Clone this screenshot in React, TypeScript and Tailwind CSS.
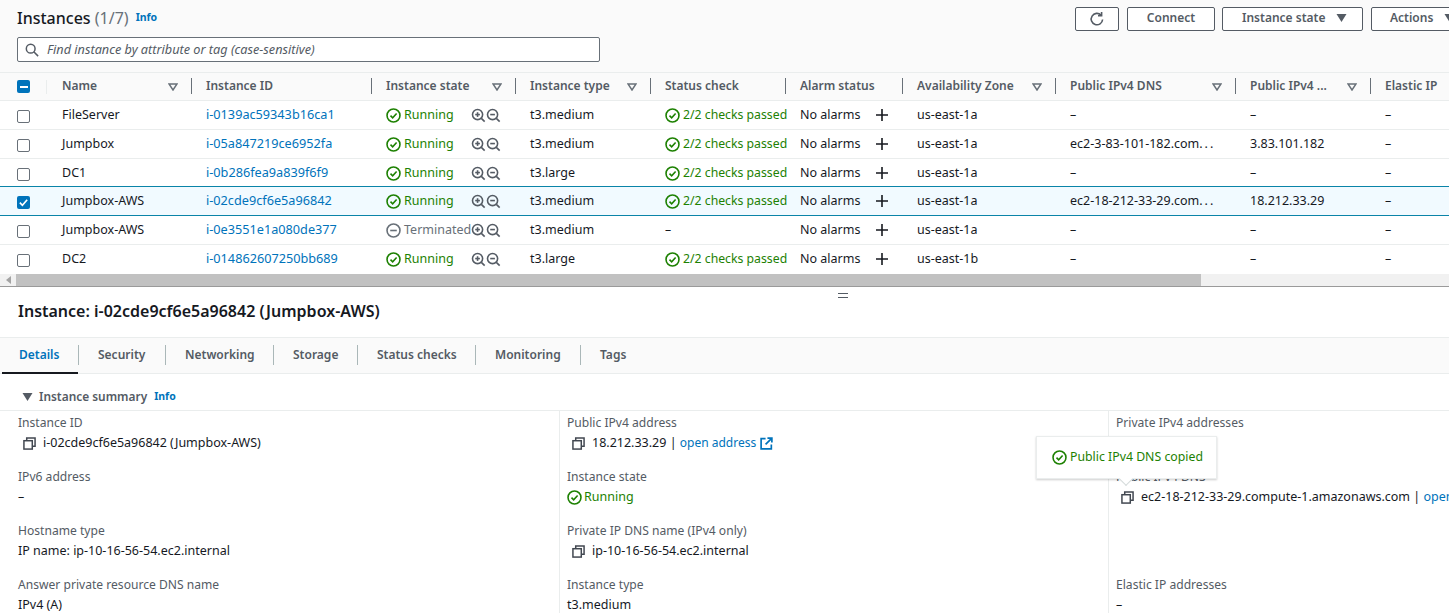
import * as React from "react";

const gridCols = "grid grid-cols-[47px_144px_180px_144px_135px_135px_117px_153px_180px_135px_79px]";

const rows = [
  { name: "FileServer", id: "i-0139ac59343b16ca1", state: "Running", type: "t3.medium", check: true, az: "us-east-1a", dns: "–", ip: "–" },
  { name: "Jumpbox", id: "i-05a847219ce6952fa", state: "Running", type: "t3.medium", check: true, az: "us-east-1a", dns: "ec2-3-83-101-182.com", ip: "3.83.101.182" },
  { name: "DC1", id: "i-0b286fea9a839f6f9", state: "Running", type: "t3.large", check: true, az: "us-east-1a", dns: "–", ip: "–" },
  { name: "Jumpbox-AWS", id: "i-02cde9cf6e5a96842", state: "Running", type: "t3.medium", check: true, az: "us-east-1a", dns: "ec2-18-212-33-29.com", ip: "18.212.33.29", selected: true },
  { name: "Jumpbox-AWS", id: "i-0e3551e1a080de377", state: "Terminated", type: "t3.medium", check: false, az: "us-east-1a", dns: "–", ip: "–" },
  { name: "DC2", id: "i-014862607250bb689", state: "Running", type: "t3.large", check: true, az: "us-east-1b", dns: "–", ip: "–" },
];

const headers = [
  { label: "Name", sort: true },
  { label: "Instance ID", sort: false },
  { label: "Instance state", sort: true },
  { label: "Instance type", sort: true },
  { label: "Status check", sort: false },
  { label: "Alarm status", sort: false },
  { label: "Availability Zone", sort: true },
  { label: "Public IPv4 DNS", sort: true },
  { label: "Public IPv4 ...", sort: true },
  { label: "Elastic IP", sort: false },
];

function CheckCircle({ className = "" }: { className?: string }) {
  return (
    <svg viewBox="0 0 16 16" className={`w-[15px] h-[15px] shrink-0 ${className}`} fill="none" stroke="currentColor" strokeWidth="1.7">
      <circle cx="8" cy="8" r="6.9" />
      <path d="M4.8 8.2l2.3 2.3 4.2-4.6" />
    </svg>
  );
}

function MinusCircle() {
  return (
    <svg viewBox="0 0 16 16" className="w-[15px] h-[15px] shrink-0 text-[#687078]" fill="none" stroke="currentColor" strokeWidth="1.7">
      <circle cx="8" cy="8" r="6.9" />
      <path d="M4.5 8h7" />
    </svg>
  );
}

function Zoom({ plus }: { plus?: boolean }) {
  return (
    <svg viewBox="0 0 16 16" className="w-[15px] h-[15px] shrink-0 text-[#545b64]" fill="none" stroke="currentColor" strokeWidth="1.7">
      <circle cx="7" cy="7" r="5.4" />
      <path d="M11 11l3.6 3.6" />
      <path d="M4.5 7h5" />
      {plus && <path d="M7 4.5v5" />}
    </svg>
  );
}

function CopyIcon() {
  return (
    <svg viewBox="0 0 14 14" className="w-[13px] h-[13px] shrink-0 text-[#414750]" fill="none" stroke="currentColor" strokeWidth="1.6">
      <rect x="1" y="4" width="9" height="9" />
      <path d="M4 3.5V1h9v9h-2.5" />
    </svg>
  );
}

function SortIcon() {
  return (
    <svg viewBox="0 0 10 8" className="w-[10px] h-[8px] text-[#687078]" fill="none" stroke="currentColor" strokeWidth="1.5">
      <path d="M1 1h8L5 7z" />
    </svg>
  );
}

function CaretDown() {
  return (
    <svg viewBox="0 0 10 8" className="w-[11px] h-[8px] text-[#545b64]" fill="currentColor">
      <path d="M0 0h10L5 8z" />
    </svg>
  );
}

function Field({ label, children }: { label: string; children: React.ReactNode }) {
  return (
    <div className="h-[54px]">
      <div className="h-[20px] leading-[20px] text-[12.1px] text-[#545b64]">{label}</div>
      <div className="h-[20px] leading-[20px] text-[#16191f] flex items-center whitespace-nowrap">{children}</div>
    </div>
  );
}

function Copy({ children }: { children: React.ReactNode }) {
  return (
    <span className="flex items-center gap-[7px] pl-[5px]">
      <CopyIcon />
      <span>{children}</span>
    </span>
  );
}

export default function App() {
  return (
    <div className="w-[1449px] h-[613px] overflow-hidden relative bg-white text-[12.5px] text-[#16191f] font-['Noto_Sans',sans-serif]">
      <div className="h-[72px] bg-[#fafafa] flex justify-between pl-[17px]">
        <div className="flex flex-col">
          <div className="h-[37px] flex items-center gap-[7px] pb-[2px]">
            <span className="text-[16px] font-medium">
              Instances <span className="font-normal text-[#687078]">(1/7)</span>
            </span>
            <span className="text-[10.5px] font-bold text-[#0073bb] mt-[1px]">Info</span>
          </div>
          <div className="w-[583px] h-[25px] border border-[#687078] rounded-[2px] bg-white flex items-center gap-[8px] pl-[7px]">
            <svg viewBox="0 0 16 16" className="w-[14px] h-[14px] text-[#545b64]" fill="none" stroke="currentColor" strokeWidth="1.7">
              <circle cx="6.5" cy="6.5" r="5" />
              <path d="M10 10l5 5" />
            </svg>
            <span className="italic text-[12.7px] pt-[1px] text-[#545b64]">Find instance by attribute or tag (case-sensitive)</span>
          </div>
        </div>
        <div className="flex gap-[8px] pt-[7px] font-semibold text-[12px] text-[#545b64] h-[31px] box-content">
          <div className="w-[44px] h-[24px] border border-[#545b64] rounded-[2px] bg-white flex items-center justify-center">
            <svg viewBox="0 0 16 16" className="w-[16px] h-[16px]" fill="none" stroke="currentColor" strokeWidth="1.6">
              <path d="M13.6 8.5a5.7 5.7 0 1 1-1.6-4.4" />
              <path d="M12.6 1v3.6H9" />
            </svg>
          </div>
          <div className="w-[88px] h-[24px] border border-[#545b64] rounded-[2px] bg-white flex items-center justify-center pb-[2px]">Connect</div>
          <div className="w-[141px] h-[24px] border border-[#545b64] rounded-[2px] bg-white flex items-center gap-[11px] pl-[19px] pb-[2px] -ml-[1px]">
            Instance state <CaretDown />
          </div>
          <div className="w-[90px] h-[24px] border border-[#545b64] rounded-[2px] bg-white flex items-center gap-[11px] pl-[18px] pb-[2px] -mr-[12px]">
            Actions <CaretDown />
          </div>
        </div>
      </div>

      <div className={`${gridCols} h-[28px] bg-[#fafafa] border-t border-[#eaeded] font-semibold text-[12px] text-[#545b64]`}>
        <div className="flex items-center pl-[17px] relative">
          <span className="w-[13px] h-[13px] rounded-[2px] bg-[#0073bb] flex items-center justify-center">
            <span className="w-[8px] h-[2px] bg-white" />
          </span>
          <span className="absolute right-0 top-[7px] h-[14px] border-r border-[#eaeded]" />
        </div>
        {headers.map((h, i) => (
          <div key={h.label} className="flex items-center relative pl-[15px] pb-[2px] whitespace-nowrap">
            {h.label}
            {h.sort && <span className="absolute right-[13px] top-[10px] flex"><SortIcon /></span>}
            {i < headers.length - 1 && <span className="absolute -right-[1px] top-[5px] h-[16px] border-r border-[#687078]" />}
          </div>
        ))}
      </div>

      {rows.map((r) => (
        <div
          key={r.id}
          className={`${gridCols} items-center ${r.selected ? "bg-[#f1faff] border-y border-[#0a84a8] h-[30px] -mb-[1px] -mt-[1px] relative" : "h-[29px] border-t border-[#eaeded]"}`}
        >
          <div className="pl-[17px] flex pt-[2px]">
            {r.selected ? (
              <span className="w-[13px] h-[13px] rounded-[2px] bg-[#0073bb] flex items-center justify-center">
                <svg viewBox="0 0 12 12" className="w-[11px] h-[11px] text-white" fill="none" stroke="currentColor" strokeWidth="1.8">
                  <path d="M2 6.2l2.8 2.8L10 3" />
                </svg>
              </span>
            ) : (
              <span className="w-[13px] h-[13px] rounded-[2px] border border-[#687078] bg-white" />
            )}
          </div>
          <div className="pl-[15px]">{r.name}</div>
          <div className="pl-[15px] text-[12.7px] text-[#0073bb]">{r.id}</div>
          <div className="pl-[15px] flex items-center">
            {r.state === "Running" ? <CheckCircle className="text-[#1d8102]" /> : <MinusCircle />}
            <span className={`ml-[3px] ${r.state === "Running" ? "w-[68px] text-[#1d8102]" : "w-[68px] text-[#687078]"}`}>{r.state}</span>
            <span className="flex -ml-[1px]">
              <Zoom plus />
              <Zoom />
            </span>
          </div>
          <div className="pl-[15px]">{r.type}</div>
          <div className="pl-[15px] flex items-center gap-[3px] whitespace-nowrap text-[12.25px] text-[#1d8102]">
            {r.check ? (
              <>
                <CheckCircle />
                2/2 checks passed
              </>
            ) : (
              <span className="text-[#16191f]">–</span>
            )}
          </div>
          <div className="pl-[15px] flex items-center gap-[15px]">
            No alarms
            <svg viewBox="0 0 14 14" className="w-[14px] h-[14px] text-[#16191f]" fill="none" stroke="currentColor" strokeWidth="1.6">
              <path d="M7 1v12M1 7h12" />
            </svg>
          </div>
          <div className="pl-[15px]">{r.az}</div>
          <div className="pl-[15px] whitespace-nowrap">
            {r.dns}
            {r.dns !== "–" && <span className="tracking-[2px]">...</span>}
          </div>
          <div className="pl-[15px]">{r.ip}</div>
          <div className="pl-[15px]">–</div>
        </div>
      ))}

      <div className="h-[13px] bg-[#f1f1f1] border-b border-[#9a9a9a] flex items-center mt-[1px]">
        <span className="w-[16px] flex justify-center">
          <span className="border-y-[4px] border-r-[5px] border-y-transparent border-r-[#a3a3a3]" />
        </span>
        <span className="w-[1185px] h-full bg-[#c1c1c1]" />
      </div>

      <div className="h-[50px] relative">
        <div className="absolute left-[838px] top-[6px] w-[10px] h-[5px] border-y border-[#545b64]" />
        <div className="pl-[18px] pt-[14px] text-[16px] font-semibold leading-[20px]">Instance: i-02cde9cf6e5a96842 (Jumpbox-AWS)</div>
      </div>

      <div className="h-[37px] bg-[#fafafa] border-y border-[#eaeded] flex font-semibold text-[12px] text-[#545b64] pl-[2px] pt-[7px]">
        <div className="w-[76px] h-[29px] border-b-2 border-[#16191f] text-[#0073bb] pl-[17px] leading-[20px]">Details</div>
        {[
          ["Security", "w-[87px]"],
          ["Networking", "w-[108px]"],
          ["Storage", "w-[84px]"],
          ["Status checks", "w-[118px]"],
          ["Monitoring", "w-[105px]"],
          ["Tags", "w-[80px]"],
        ].map(([t, w]) => (
          <div key={t} className={`${w} h-[20px] leading-[20px] pl-[19px] border-l border-[#aab7b8]`}>
            {t}
          </div>
        ))}
      </div>

      <div className="h-[37px] flex items-center pl-[22px] pt-[10px] gap-[6px] font-semibold text-[11.9px] text-[#545b64] border-b border-[#eaeded]">
        <CaretDown />
        Instance summary
        <span className="text-[10.5px] font-bold text-[#0073bb] ml-[1px]">Info</span>
      </div>

      <div className="grid grid-cols-[560px_549px_340px] h-[203px]">
        <div className="pl-[18px] pt-[2px] border-r border-[#eaeded]">
          <Field label="Instance ID">
            <Copy>i-02cde9cf6e5a96842 (Jumpbox-AWS)</Copy>
          </Field>
          <Field label="IPv6 address">–</Field>
          <Field label="Hostname type">IP name: ip-10-16-56-54.ec2.internal</Field>
          <Field label="Answer private resource DNS name">IPv4 (A)</Field>
        </div>
        <div className="pl-[7px] pt-[2px] border-r border-[#eaeded]">
          <Field label="Public IPv4 address">
            <Copy>
              18.212.33.29 | <span className="text-[12px] text-[#0073bb]">open address</span>
            </Copy>
            <svg viewBox="0 0 14 14" className="w-[13px] h-[13px] ml-[4px] text-[#0073bb]" fill="none" stroke="currentColor" strokeWidth="1.8">
              <path d="M6 1.8H1.2v11h11V8" />
              <path d="M8 1.2h4.8V6M12.6 1.4L6 8" />
            </svg>
          </Field>
          <Field label="Instance state">
            <span className="flex items-center gap-[2px] text-[#1d8102]">
              <CheckCircle /> Running
            </span>
          </Field>
          <Field label="Private IP DNS name (IPv4 only)">
            <Copy>ip-10-16-56-54.ec2.internal</Copy>
          </Field>
          <Field label="Instance type">t3.medium</Field>
        </div>
        <div className="pl-[7px] pt-[2px] overflow-hidden">
          <Field label="Private IPv4 addresses">{""}</Field>
          <Field label="Public IPv4 DNS">
            <Copy>
              ec2-18-212-33-29.compute-1.amazonaws.com | <span className="text-[#0073bb]">open</span>
            </Copy>
          </Field>
          <div className="h-[54px]" />
          <Field label="Elastic IP addresses">–</Field>
        </div>
      </div>

      <div className="absolute left-[1036px] top-[436px] w-[181px] h-[43px] bg-white border border-[#eaeded] shadow-[0_1px_2px_rgba(0,0,0,0.2)] flex items-center pl-[15px] gap-[3px] text-[12.3px] text-[#1d8102]">
        <CheckCircle />
        Public IPv4 DNS copied
        <span className="absolute left-[84px] top-[37px] w-[10px] h-[10px] rotate-45 bg-white border-r border-b border-[#d5dbdb]" />
      </div>
    </div>
  );
}
